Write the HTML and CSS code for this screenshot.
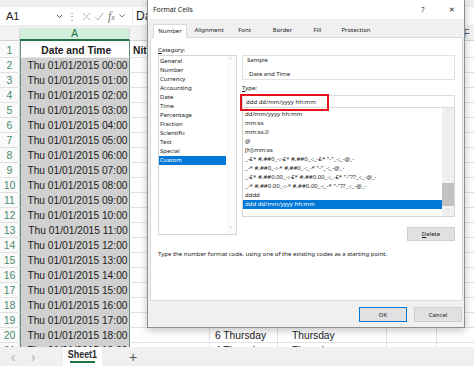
FILE: index.html
```html
<!DOCTYPE html>
<html lang="en">
<head>
    <meta charset="UTF-8">
    <meta name="viewport" content="width=device-width, initial-scale=1.0">
    <title>Format Cells</title>
    <link rel="stylesheet" href="styles.css">
</head>
<body>
<div class="app">
    <div class="ribbon-edge"></div>
    <div class="formula-bar">
        <div class="name-box">
            <span>A1</span>
            <svg class="chev" width="7" height="5" viewBox="0 0 7 5"><path d="M1 1l2.5 2.5L6 1" fill="none" stroke="#555" stroke-width="1"/></svg>
        </div>
        <span class="fb-dots">&#8942;</span>
        <div class="fb-buttons">
            <svg width="9" height="9" viewBox="0 0 9 9"><path d="M1 1l7 7M8 1L1 8" stroke="#b5b5b5" stroke-width="1"/></svg>
            <svg width="10" height="9" viewBox="0 0 10 9"><path d="M1 5l3 3 5-7" fill="none" stroke="#b5b5b5" stroke-width="1"/></svg>
            <span class="fx">f<small>x</small></span>
            <svg width="6" height="4" viewBox="0 0 6 4"><path d="M0.5 0.5l2.5 2.5 2.5-2.5" fill="none" stroke="#777" stroke-width="1"/></svg>
        </div>
        <div class="formula-input">Date and Time</div>
    </div>

    <div class="sheet">
        <div class="row col-heads">
            <span class="corner"></span><span class="ch ch-sel">A</span><span class="ch">B</span><span class="ch">C</span><span class="ch">D</span><span class="ch">E</span><span class="ch">F</span>
        </div>
        <div class="row row-first">
            <span class="rh">1</span><span class="a a-head"><span class="t">Date and Time</span></span><span class="b-head"><span class="t">Nitrogen Dioxide</span></span><span></span><span></span><span></span><span></span>
        </div>
        <div class="row"><span class="rh">2</span><span class="a"><span class="t">Thu 01/01/2015 00:00</span></span><span></span><span></span><span></span><span></span><span></span></div>
        <div class="row"><span class="rh">3</span><span class="a"><span class="t">Thu 01/01/2015 01:00</span></span><span></span><span></span><span></span><span></span><span></span></div>
        <div class="row"><span class="rh">4</span><span class="a"><span class="t">Thu 01/01/2015 02:00</span></span><span></span><span></span><span></span><span></span><span></span></div>
        <div class="row"><span class="rh">5</span><span class="a"><span class="t">Thu 01/01/2015 03:00</span></span><span></span><span></span><span></span><span></span><span></span></div>
        <div class="row"><span class="rh">6</span><span class="a"><span class="t">Thu 01/01/2015 04:00</span></span><span></span><span></span><span></span><span></span><span></span></div>
        <div class="row"><span class="rh">7</span><span class="a"><span class="t">Thu 01/01/2015 05:00</span></span><span></span><span></span><span></span><span></span><span></span></div>
        <div class="row"><span class="rh">8</span><span class="a"><span class="t">Thu 01/01/2015 06:00</span></span><span></span><span></span><span></span><span></span><span></span></div>
        <div class="row"><span class="rh">9</span><span class="a"><span class="t">Thu 01/01/2015 07:00</span></span><span></span><span></span><span></span><span></span><span></span></div>
        <div class="row"><span class="rh">10</span><span class="a"><span class="t">Thu 01/01/2015 08:00</span></span><span></span><span></span><span></span><span></span><span></span></div>
        <div class="row"><span class="rh">11</span><span class="a"><span class="t">Thu 01/01/2015 09:00</span></span><span></span><span></span><span></span><span></span><span></span></div>
        <div class="row"><span class="rh">12</span><span class="a"><span class="t">Thu 01/01/2015 10:00</span></span><span></span><span></span><span></span><span></span><span></span></div>
        <div class="row"><span class="rh">13</span><span class="a"><span class="t">Thu 01/01/2015 11:00</span></span><span></span><span></span><span></span><span></span><span></span></div>
        <div class="row"><span class="rh">14</span><span class="a"><span class="t">Thu 01/01/2015 12:00</span></span><span></span><span></span><span></span><span></span><span></span></div>
        <div class="row"><span class="rh">15</span><span class="a"><span class="t">Thu 01/01/2015 13:00</span></span><span></span><span></span><span></span><span></span><span></span></div>
        <div class="row"><span class="rh">16</span><span class="a"><span class="t">Thu 01/01/2015 14:00</span></span><span></span><span></span><span></span><span></span><span></span></div>
        <div class="row"><span class="rh">17</span><span class="a"><span class="t">Thu 01/01/2015 15:00</span></span><span></span><span></span><span></span><span></span><span></span></div>
        <div class="row"><span class="rh">18</span><span class="a"><span class="t">Thu 01/01/2015 16:00</span></span><span></span><span></span><span></span><span></span><span></span></div>
        <div class="row"><span class="rh">19</span><span class="a"><span class="t">Thu 01/01/2015 17:00</span></span><span></span><span></span><span></span><span></span><span></span></div>
        <div class="row"><span class="rh">20</span><span class="a"><span class="t">Thu 01/01/2015 18:00</span></span><span></span><span class="day"><span class="t">6 Thursday</span></span><span class="day day-name"><span class="t">Thursday</span></span><span></span><span></span></div>
        <div class="row"><span class="rh">21</span><span class="a"><span class="t">Thu 01/01/2015 19:00</span></span><span></span><span class="day"><span class="t">4 Thursday</span></span><span class="day day-name"><span class="t">Thursday</span></span><span></span><span></span></div>
    </div>

    <div class="sheet-tabs">
        <span class="nav">&#8249;</span>
        <span class="nav">&#8250;</span>
        <span class="sheet-tab"><span class="t">Sheet1</span></span>
        <span class="add">+</span>
    </div>

    <div class="dialog">
        <div class="dlg-title">
            <span>Format Cells</span>
            <span class="help">?</span>
            <span class="close">&#10005;</span>
        </div>
        <div class="dlg-tabs">
            <span class="tab tab-number active">Number</span>
            <span class="tab tab-align">Alignment</span>
            <span class="tab tab-font">Font</span>
            <span class="tab tab-border">Border</span>
            <span class="tab tab-fill">Fill</span>
            <span class="tab tab-protect">Protection</span>
        </div>
        <div class="dlg-panel">
            <div class="format-grid">
                <div class="category">
                    <div class="label"><u>C</u>ategory:</div>
                    <div class="listbox cat-list">
                        <div class="items">
                            <div>General</div>
                            <div>Number</div>
                            <div>Currency</div>
                            <div>Accounting</div>
                            <div>Date</div>
                            <div>Time</div>
                            <div>Percentage</div>
                            <div>Fraction</div>
                            <div>Scientific</div>
                            <div>Text</div>
                            <div>Special</div>
                            <div class="selected">Custom</div>
                        </div>
                        <div class="scroll">
                            <span class="arrow">&#708;</span>
                            <span class="arrow">&#709;</span>
                        </div>
                    </div>
                </div>
                <div class="details">
                    <div class="sample">
                        <div>Sample</div>
                        <div class="sample-value">Date and Time</div>
                    </div>
                    <div class="label type-label"><u>T</u>ype:</div>
                    <div class="type-input">
                        ddd dd/mm/yyyy hh:mm
                        <span class="highlight"></span>
                    </div>
                    <div class="listbox type-list">
                        <div class="items">
                            <div>dd/mm/yyyy hh:mm</div>
                            <div>mm:ss</div>
                            <div>mm:ss.0</div>
                            <div>@</div>
                            <div>[h]:mm:ss</div>
                            <div>_-£* #,##0_-;-£* #,##0_-;_-£* "-"_-;_-@_-</div>
                            <div>_-* #,##0_-;-* #,##0_-;_-* "-"_-;_-@_-</div>
                            <div>_-£* #,##0.00_-;-£* #,##0.00_-;_-£* "-"??_-;_-@_-</div>
                            <div>_-* #,##0.00_-;-* #,##0.00_-;_-* "-"??_-;_-@_-</div>
                            <div>dddd</div>
                            <div class="selected">ddd dd/mm/yyyy hh:mm</div>
                        </div>
                        <div class="scroll">
                            <span class="arrow">&#708;</span>
                            <span class="thumb"></span>
                            <span class="arrow">&#709;</span>
                        </div>
                    </div>
                    <button class="btn delete"><u>D</u>elete</button>
                </div>
            </div>
            <p class="hint">Type the number format code, using one of the existing codes as a starting point.</p>
        </div>
        <div class="dlg-buttons">
            <button class="btn ok">OK</button>
            <button class="btn">Cancel</button>
        </div>
    </div>
</div>
</body>
</html>
```

FILE: styles.css
```css
body {
    margin: 0;
    font-family: "Liberation Sans", Arial, sans-serif;
    background: #fff;
}
.app {
    position: relative;
    width: 474px;
    height: 366px;
    overflow: hidden;
    display: flex;
    flex-direction: column;
    background: #fff;
}
.ribbon-edge {
    height: 7px;
    background: #efefef;
}

/* narrow text: the sheet font is condensed */
.t {
    display: inline-block;
    white-space: nowrap;
    transform: scaleX(0.89);
    transform-origin: left center;
}

/* formula bar */
.formula-bar {
    height: 18px;
    display: flex;
    align-items: center;
    border-bottom: 3px solid #efefef;
    font-size: 11px;
    color: #222;
}
.name-box {
    width: 66px;
    box-sizing: border-box;
    display: flex;
    align-items: center;
    justify-content: space-between;
    padding: 0 3px 0 6px;
}
.fb-dots {
    width: 12px;
    text-align: center;
    color: #888;
    font-size: 10px;
}
.fb-buttons {
    display: flex;
    align-items: center;
    gap: 3px;
    padding-left: 4px;
    width: 54px;
    box-sizing: border-box;
}
.fx {
    font-family: "Liberation Serif", serif;
    font-style: italic;
    color: #777;
    font-size: 12px;
    margin: 0 1px;
}
.fx small {
    font-size: 8px;
}
.formula-input {
    flex: 1;
    padding-left: 3px;
    border-left: 1px solid #e3e3e3;
    font-size: 12px;
}

/* grid */
.sheet {
    flex: 1;
    overflow: hidden;
    font-size: 11.5px;
    color: #1b1b1b;
}
.row {
    display: grid;
    grid-template-columns: 20px 110px 80px 68px 109px 50px 60px;
    height: 15px;
}
.row > span {
    box-sizing: border-box;
    display: flex;
    align-items: flex-end;
    border-right: 1px solid #e1e1e1;
    border-bottom: 1px solid #e1e1e1;
    white-space: nowrap;
    overflow: hidden;
    padding: 0 3px;
    line-height: 14px;
}
.row-first {
    height: 17px;
}
.col-heads {
    height: 13px;
    background: #f3f3f3;
}
.col-heads > span {
    align-items: center;
    justify-content: center;
    border-right-color: #dadada;
    border-bottom-color: #d2d2d2;
    font-size: 10px;
    line-height: 12px;
    color: #555;
}
.col-heads .ch-sel {
    background: #d2eedd;
    color: #1d6b40;
    border-bottom: 2px solid #217346;
}
.rh {
    background: #fafafa;
    justify-content: center;
    font-size: 10.5px;
    color: #4b8b69;
}
.row > .rh {
    border-right-color: #d6d6d6;
}
.row > .a {
    background: #d0d0d0;
    border-left: 1px solid #5d9276;
    border-right: 1px solid #5d9276;
    border-bottom-color: #d0d0d0;
    justify-content: flex-end;
    padding-right: 1px;
}
.a .t {
    transform-origin: right center;
}
.row > .a-head {
    background: #fff;
    justify-content: center;
    font-weight: bold;
    border-bottom-color: #e8e8e8;
}
.a-head .t {
    transform-origin: center;
}
.b-head {
    font-weight: bold;
}
.row > .day {
    padding-left: 5px;
}
.row > .day-name {
    padding-left: 14px;
}

/* sheet tabs */
.sheet-tabs {
    height: 19px;
    display: flex;
    align-items: center;
    background: #f0f0f0;
    font-size: 11px;
    color: #222;
}
.nav {
    width: 20px;
    text-align: center;
    color: #b0b0b0;
    font-size: 14px;
    margin-left: 3px;
}
.nav + .nav {
    margin-left: 0;
}
.sheet-tab {
    margin-left: 20px;
    width: 39px;
    height: 19px;
    box-sizing: border-box;
    padding-bottom: 4px;
    display: flex;
    align-items: center;
    justify-content: center;
    background: #fff;
    font-weight: bold;
    color: #2c2c2c;
    font-size: 10px;
    position: relative;
}
.sheet-tab .t {
    transform-origin: center;
}
.sheet-tab::after {
    content: "";
    position: absolute;
    left: 7px;
    right: 7px;
    bottom: 3px;
    height: 2px;
    background: #217346;
}
.add {
    margin-left: 27px;
    font-size: 14px;
    color: #555;
}

/* dialog */
.dialog {
    position: absolute;
    left: 147px;
    top: -1px;
    width: 318px;
    height: 329px;
    box-sizing: border-box;
    border: 1px solid #8f8f8f;
    background: #f0f0f0;
    box-shadow: 0 2px 8px rgba(0, 0, 0, 0.25);
    display: flex;
    flex-direction: column;
    font-family: "Noto Sans", sans-serif;
    font-size: 6px;
    color: #1a1a1a;
}
.dlg-title {
    height: 19px;
    flex: none;
    background: #fff;
    display: flex;
    align-items: center;
    padding-left: 5px;
    font-size: 6.8px;
}
.dlg-title .help {
    margin-left: auto;
    width: 10px;
    text-align: center;
    margin-right: 18px;
}
.dlg-title .close {
    width: 12px;
    text-align: center;
    margin-right: 6px;
    font-size: 7px;
}
.dlg-tabs {
    height: 18px;
    flex: none;
    display: flex;
    align-items: flex-end;
    padding-left: 5px;
}
.tab {
    height: 13px;
    line-height: 13px;
    text-align: center;
}
.tab.active {
    height: 14px;
    background: #fff;
    border: 1px solid #d9d9d9;
    border-bottom: none;
    box-sizing: border-box;
    margin-bottom: -1px;
    position: relative;
}
.tab-number { width: 34px; }
.tab-align { width: 44px; }
.tab-font { width: 27px; }
.tab-border { width: 49px; }
.tab-fill { width: 21px; }
.tab-protect { width: 56px; }

.dlg-panel {
    flex: 1;
    margin: 0 1px 0 2px;
    background: #fff;
    border: 1px solid #dadada;
    padding: 8px 6px 0 7px;
}
.format-grid {
    display: grid;
    grid-template-columns: 79px 213px;
    column-gap: 5px;
}
.label {
    line-height: 9px;
}
.listbox {
    display: flex;
    border: 1px solid #d4d4d4;
    box-sizing: border-box;
}
.listbox .items {
    flex: 1;
    padding-top: 1px;
    overflow: hidden;
}
.listbox .items > div {
    height: 9px;
    line-height: 9px;
    padding-left: 1px;
    white-space: nowrap;
}
.listbox .items > .selected {
    background: #0078d7;
    color: #fff;
}
.listbox .scroll {
    width: 10px;
    display: flex;
    flex-direction: column;
    align-items: center;
    justify-content: space-between;
    color: #8a8a8a;
    font-size: 7px;
}
.cat-list {
    height: 180px;
}
.cat-list .scroll {
    background: #fbfbfb;
}
.details {
    padding-top: 9px;
    display: flex;
    flex-direction: column;
}
.sample {
    height: 25px;
    box-sizing: border-box;
    border: 1px solid #e2e2e2;
    padding: 0 4px;
    line-height: 8px;
}
.sample-value {
    margin-top: 6px;
    padding-left: 2px;
}
.type-label {
    margin-top: 4px;
}
.type-input {
    position: relative;
    margin-top: 2px;
    height: 13px;
    box-sizing: border-box;
    border: 1px solid #dadada;
    line-height: 12px;
    padding-left: 3px;
}
.type-input .highlight {
    position: absolute;
    left: -3px;
    top: -2px;
    width: 89px;
    height: 17px;
    box-sizing: border-box;
    border: 2px solid #e3121d;
}
.type-list {
    height: 109px;
    border-top: none;
}
.type-list .items {
    padding-top: 2px;
}
.type-list .items > div {
    padding-left: 2px;
}
.type-list .scroll {
    width: 12px;
    background: #f0f0f0;
}
.type-list .thumb {
    width: 12px;
    height: 23px;
    background: #c2c2c2;
    margin-top: auto;
    margin-bottom: 1px;
}
.btn {
    font-family: "Noto Sans", sans-serif;
    font-size: 6px;
    color: #1a1a1a;
    width: 48px;
    height: 15px;
    padding: 0;
    background: #e1e1e1;
    border: 1px solid #d0d0d0;
}
.delete {
    align-self: flex-end;
    margin-top: 10px;
    height: 14px;
}
.hint {
    margin: 9px 0 0;
    line-height: 8px;
}
.dlg-buttons {
    height: 26px;
    flex: none;
    display: flex;
    justify-content: flex-end;
    align-items: flex-start;
    gap: 7px;
    padding: 6px 2px 0 0;
    box-sizing: border-box;
}
.btn.ok {
    border: 1px solid #0078d7;
}
```
